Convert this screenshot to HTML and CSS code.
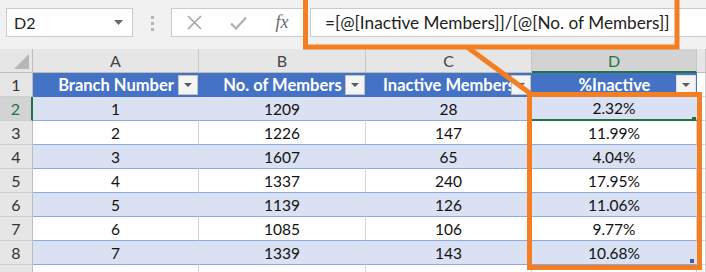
FILE: index.html
```html
<!DOCTYPE html>
<html lang="en">
<head>
  <meta charset="UTF-8" />
  <title>Inactive Members</title>
  <link rel="stylesheet" href="styles.css">
</head>
<body>
<div class="app">

  <div class="toolbar">
    <div class="namebox">
      <span>D2</span>
      <svg class="caret" width="9" height="5" viewBox="0 0 9 5"><path d="M0 0h9L4.5 5z" fill="#6b6b6b"/></svg>
    </div>
    <div class="grip"><i></i><i></i><i></i></div>
    <div class="fbuttons">
      <span class="fbtn">
        <svg width="15" height="15" viewBox="0 0 15 15"><path d="M1 1L14 14M14 1L1 14" stroke="#a6a6a6" stroke-width="1.6" fill="none"/></svg>
      </span>
      <span class="fbtn">
        <svg width="17" height="14" viewBox="0 0 17 14"><path d="M1 7.5l5 5L16 1.5" stroke="#b3b3b3" stroke-width="2.4" fill="none"/></svg>
      </span>
      <span class="fbtn fx">fx</span>
    </div>
    <div class="formula">=[@[Inactive Members]]/[@[No. of Members]]</div>
  </div>

  <div class="sheet">
    <!-- column letters -->
    <div class="cell corner"><span class="tri"></span></div>
    <div class="cell colhead">A</div>
    <div class="cell colhead">B</div>
    <div class="cell colhead">C</div>
    <div class="cell colhead sel">D</div>
    <div class="cell colhead"></div>

    <!-- table header -->
    <div class="cell rowhead">1</div>
    <div class="cell th">Branch Number<span class="drop"></span></div>
    <div class="cell th">No. of Members<span class="drop"></span></div>
    <div class="cell th">Inactive Members<span class="drop"></span></div>
    <div class="cell th">%Inactive<span class="drop light"></span></div>
    <div class="cell out"></div>

    <div class="cell rowhead sel">2</div>
    <div class="cell band">1</div>
    <div class="cell band">1209</div>
    <div class="cell band">28</div>
    <div class="cell band cur">2.32%</div>
    <div class="cell out"></div>

    <div class="cell rowhead">3</div>
    <div class="cell plain">2</div>
    <div class="cell plain">1226</div>
    <div class="cell plain">147</div>
    <div class="cell plain">11.99%</div>
    <div class="cell out"></div>

    <div class="cell rowhead">4</div>
    <div class="cell band">3</div>
    <div class="cell band">1607</div>
    <div class="cell band">65</div>
    <div class="cell band">4.04%</div>
    <div class="cell out"></div>

    <div class="cell rowhead">5</div>
    <div class="cell plain">4</div>
    <div class="cell plain">1337</div>
    <div class="cell plain">240</div>
    <div class="cell plain">17.95%</div>
    <div class="cell out"></div>

    <div class="cell rowhead">6</div>
    <div class="cell band">5</div>
    <div class="cell band">1139</div>
    <div class="cell band">126</div>
    <div class="cell band">11.06%</div>
    <div class="cell out"></div>

    <div class="cell rowhead">7</div>
    <div class="cell plain">6</div>
    <div class="cell plain">1085</div>
    <div class="cell plain">106</div>
    <div class="cell plain">9.77%</div>
    <div class="cell out"></div>

    <div class="cell rowhead">8</div>
    <div class="cell band">7</div>
    <div class="cell band">1339</div>
    <div class="cell band">143</div>
    <div class="cell band last">10.68%</div>
    <div class="cell out"></div>

    <div class="cell rowhead"></div>
    <div class="cell out"></div>
    <div class="cell out"></div>
    <div class="cell out"></div>
    <div class="cell out"></div>
    <div class="cell out"></div>
  </div>

  <!-- orange callout drawn over the sheet -->
  <svg class="callout" width="706" height="272" viewBox="0 0 706 272">
    <rect x="305.5" y="-5" width="371.5" height="52" fill="none" stroke="#f47f22" stroke-width="5"/>
    <line x1="467" y1="47" x2="531" y2="94" stroke="#f47f22" stroke-width="5"/>
    <rect x="529.5" y="94.5" width="170" height="173" fill="none" stroke="#f47f22" stroke-width="5"/>
  </svg>

</div>
</body>
</html>
```

FILE: styles.css
```css
body {
  margin: 0;
  font-family: Lato, "Open Sans", sans-serif;
  background: #fff;
}

.app {
  position: relative;
  width: 706px;
  height: 272px;
  overflow: hidden;
}

/* formula bar */
.toolbar {
  height: 49px;
  box-sizing: border-box;
  padding-top: 8px;
  background: #f1f1f1;
  display: flex;
  align-items: flex-start;
}

.namebox {
  margin-left: 6px;
  width: 127px;
  height: 29px;
  box-sizing: border-box;
  background: #fff;
  border: 1px solid #cacaca;
  display: flex;
  align-items: center;
  justify-content: space-between;
  padding: 0 9px 0 7px;
  font-size: 16px;
  color: #222;
}

.grip {
  width: 38px;
  display: flex;
  flex-direction: column;
  align-items: center;
  gap: 3px;
  padding-top: 8px;
}

.grip i {
  display: block;
  width: 3px;
  height: 3px;
  background: #b5b5b5;
}

.fbuttons {
  width: 134px;
  height: 29px;
  box-sizing: border-box;
  background: #fff;
  border: 1px solid #cacaca;
  display: flex;
  align-items: center;
}

.fbtn {
  width: 44px;
  display: flex;
  justify-content: center;
  align-items: center;
}

.fx {
  font-family: "Liberation Serif", serif;
  font-style: italic;
  font-size: 18px;
  color: #6a6a6a;
}

.formula {
  margin-left: 5px;
  flex: 1;
  height: 29px;
  box-sizing: border-box;
  background: #fff;
  border: 1px solid #cacaca;
  border-right: none;
  padding-left: 14px;
  font-size: 17.2px;
  line-height: 27px;
  color: #222;
  white-space: nowrap;
}

/* grid */
.sheet {
  display: grid;
  grid-template-columns: 33px 166px 167px 166px 165px 1fr;
  grid-auto-rows: 24px;
}

.cell {
  box-sizing: border-box;
  display: flex;
  align-items: center;
  justify-content: center;
  font-size: 15.5px;
  color: #111;
  white-space: nowrap;
  overflow: hidden;
  border-right: 1px solid #d4d4d4;
  border-bottom: 1px solid #d4d4d4;
}

.corner {
  position: relative;
  background: #e6e6e6;
  border-right-color: #bdbdbd;
  border-bottom-color: #bdbdbd;
}

.tri {
  position: absolute;
  right: 3px;
  bottom: 3px;
  width: 0;
  height: 0;
  border-left: 15px solid transparent;
  border-bottom: 15px solid #b7b7b7;
}

.colhead {
  background: #e6e6e6;
  color: #444;
  font-size: 16px;
  border-right-color: #c8c8c8;
  border-bottom-color: #bdbdbd;
}

.colhead.sel {
  background: #d3d3d3;
  color: #217346;
  border-bottom: 2px solid #217346;
}

.rowhead {
  background: #e6e6e6;
  color: #333;
  font-size: 16px;
  border-right-color: #bdbdbd;
  border-bottom-color: #cfcfcf;
}

.rowhead.sel {
  background: #d3d3d3;
  color: #217346;
  border-right: 2px solid #217346;
}

.th {
  position: relative;
  background: #4472c4;
  color: #fff;
  font-weight: 700;
  font-size: 16.5px;
  border-right: none;
  border-bottom: none;
}

.drop {
  position: absolute;
  right: 1px;
  top: 2px;
  width: 20px;
  height: 20px;
  box-sizing: border-box;
  background: #f4f4f4;
  border: 1px solid #c3c3c3;
}

.drop::after {
  content: "";
  position: absolute;
  left: 5px;
  top: 7px;
  border-left: 4px solid transparent;
  border-right: 4px solid transparent;
  border-top: 4px solid #5a5a5a;
}

.drop.light {
  border-color: #e1e1e1;
}

.band {
  background: #d9e1f2;
  border-right-color: #d9e1f2;
  border-bottom-color: #8ea9db;
}

.plain {
  border-bottom-color: #8ea9db;
}

.cur {
  position: relative;
  border-bottom: 2px solid #217346;
}

.cur::after {
  content: "";
  position: absolute;
  right: -1px;
  bottom: -3px;
  width: 5px;
  height: 5px;
  background: #217346;
}

.last {
  position: relative;
}

.last::after {
  content: "";
  position: absolute;
  right: 2px;
  bottom: 1px;
  width: 4px;
  height: 4px;
  background: #3f5fa8;
}

.out {
  background: #fff;
}

.callout {
  position: absolute;
  left: 0;
  top: 0;
  pointer-events: none;
}
```
